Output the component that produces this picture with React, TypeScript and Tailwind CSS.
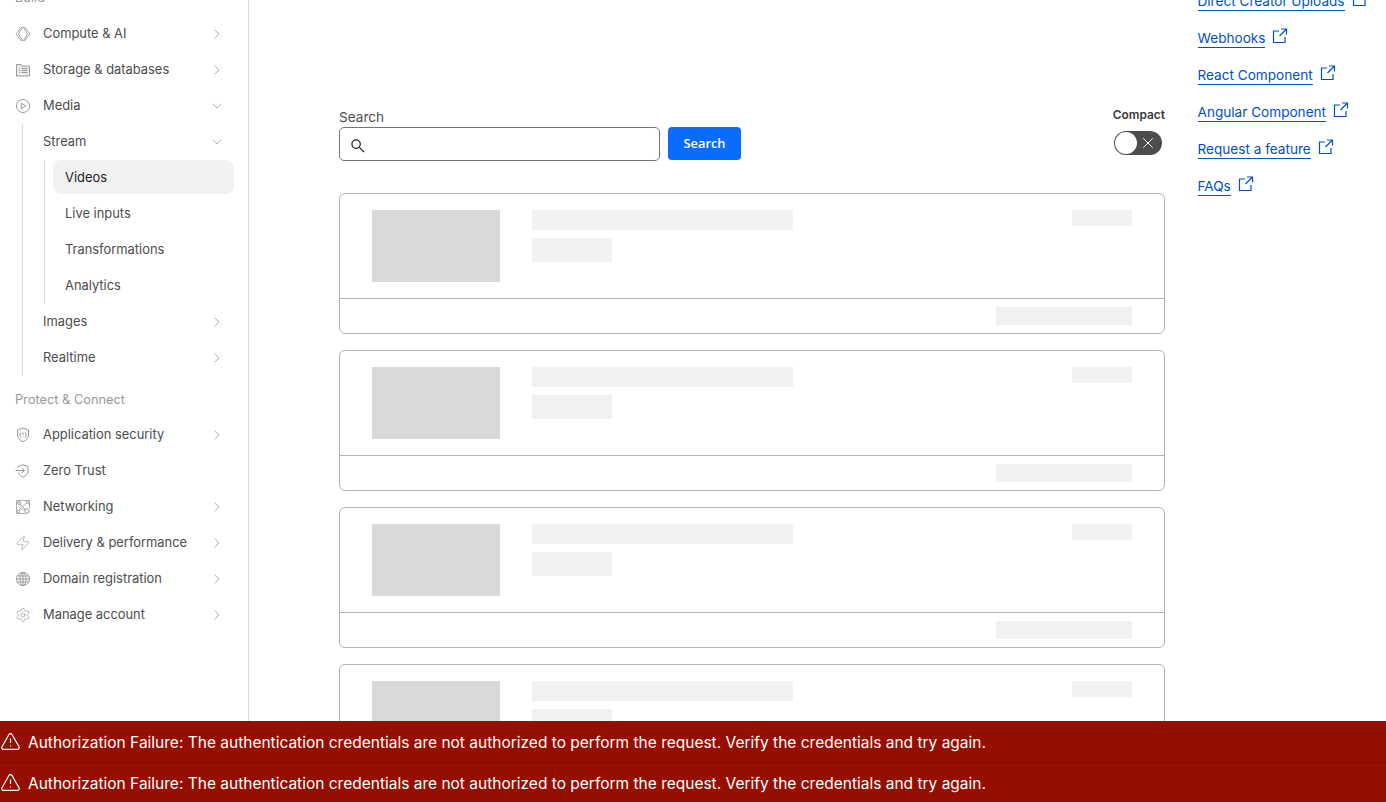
import { ChevronDown, ChevronRight, Settings, TriangleAlert, X, Zap } from 'lucide-react';
import type { ReactNode } from 'react';

const iconClass = 'w-4 h-4 text-[#999999]';

function SvgIcon({ children }: { children: ReactNode }) {
  return (
    <svg viewBox="0 0 16 16" fill="none" stroke="currentColor" strokeWidth="1" className={iconClass}>
      {children}
    </svg>
  );
}

const ComputeIcon = () => (
  <SvgIcon>
    <path d="M6 1.500 1 8l5 6.500h1.500L3.500 8l4-6.500zM10 1.500 15 8l-5 6.500H8.500l4-6.500-4-6.500z" strokeWidth="0.9" />
  </SvgIcon>
);

const StorageIcon = () => (
  <SvgIcon>
    <path d="M1.500 14v-11.500h4.500l1 1.500h7.500v10z" fill="#ececec" />
    <path d="M4 6.500h1M6.500 6.500h6M4 8.500h1M6.500 8.500h6M4 10.500h1M6.500 10.500h6" />
  </SvgIcon>
);

const MediaIcon = () => (
  <SvgIcon>
    <circle cx="8" cy="8" r="6.500" />
    <path d="M6.200 5.200v5.600L10.800 8z" />
  </SvgIcon>
);

const SecurityIcon = () => (
  <SvgIcon>
    <path d="M8 1 13.500 3v5c0 3-2.500 5.400-5.500 6.800-3-1.400-5.500-3.800-5.500-6.800V3z" />
    <path d="M6 5.500a3.500 3.500 0 0 0 0 5M10 5.500a3.500 3.500 0 0 1 0 5M8 5.500v3M8 9.800v.7" />
  </SvgIcon>
);

const ZeroTrustIcon = () => (
  <SvgIcon>
    <path d="M3 5V3.500L8 1.800l5 1.700V8c0 3-2.200 5-5 6.200C5.800 13.200 3.800 11.500 3.200 9.500" />
    <path d="M0.500 7.500H9.500M7 5l2.500 2.500L7 10" />
  </SvgIcon>
);

const NetworkIcon = () => (
  <SvgIcon>
    <path d="M1.500 1.500h13M1.500 1.500v13M1.500 14.500h9M14.500 1.500v8" strokeWidth="0.8" />
    <path d="M3.500 3.500 11 11M12.500 3.500 5 9.500 3.500 12.500M5 9.500l6 1.500" strokeWidth="0.8" />
    <circle cx="4" cy="4" r="1.500" fill="white" />
    <circle cx="12.500" cy="3.500" r="1.200" fill="white" />
    <circle cx="3.500" cy="12.500" r="1.200" fill="white" />
    <circle cx="12" cy="12" r="2.200" fill="white" />
  </SvgIcon>
);

const GlobeIcon = () => (
  <SvgIcon>
    <circle cx="8" cy="8" r="6.500" />
    <ellipse cx="8" cy="8" rx="3" ry="6.500" />
    <path d="M8 1.500v13M1.500 8h13M2.300 5h11.400M2.300 11h11.400" />
  </SvgIcon>
);

function ExternalIcon() {
  return (
    <svg viewBox="0 0 16 16" fill="none" stroke="#0051c3" strokeWidth="1.200" className="w-4 h-4 mb-[5px] ml-[7px]">
      <path d="M7 3H1.500v11.500H13V9" />
      <path d="M9 1h5.500v5.500M14.500 1 7.500 8" />
    </svg>
  );
}

function NavRow({ icon, label, chevron }: { icon?: ReactNode; label: string; chevron?: 'right' | 'down' }) {
  return (
    <div className="h-9 flex items-center text-[12.9px] text-[#4d4d4d]">
      {icon && <span className="w-[28px] flex shrink-0 justify-start">{icon}</span>}
      <span className="flex-1">{label}</span>
      {chevron === 'right' && <ChevronRight className="w-4 h-4 mr-[9px] text-[#8a8a8a]" strokeWidth={1} />}
      {chevron === 'down' && <ChevronDown className="w-4 h-4 mr-[9px] text-[#8a8a8a]" strokeWidth={1} />}
    </div>
  );
}

function Sidebar() {
  return (
    <aside className="w-[249px] shrink-0 border-r border-[#d9d9d9] overflow-hidden">
      <div className="-mt-[20px] pl-[15px] pr-[14px]">
        <div className="h-9 flex items-center text-[12.8px] text-[#999999]">Build</div>
        <NavRow icon={<ComputeIcon />} label="Compute & AI" chevron="right" />
        <NavRow icon={<StorageIcon />} label="Storage & databases" chevron="right" />
        <NavRow icon={<MediaIcon />} label="Media" chevron="down" />
        <div className="ml-[7px] pl-[20px] border-l border-[#d9d9d9] mb-[5px]">
          <NavRow label="Stream" chevron="down" />
          <div className="ml-[1px] pl-[8px] border-l border-[#d9d9d9]">
            <div className="h-9 flex items-start">
              <div className="w-full h-[34px] flex items-center pl-3 pt-[1px] rounded-lg bg-[#f2f2f2] text-[12.9px] text-[#1d1d1d]">
                Videos
              </div>
            </div>
            <div className="h-9 flex items-center pl-3 text-[12.9px] text-[#4d4d4d]">Live inputs</div>
            <div className="h-9 flex items-center pl-3 text-[12.9px] text-[#4d4d4d]">Transformations</div>
            <div className="h-9 flex items-center pl-3 text-[12.9px] text-[#4d4d4d]">Analytics</div>
          </div>
          <NavRow label="Images" chevron="right" />
          <NavRow label="Realtime" chevron="right" />
        </div>
        <div className="h-9 flex items-center pt-[2px] text-[12.8px] text-[#999999]">Protect &amp; Connect</div>
        <NavRow icon={<SecurityIcon />} label="Application security" chevron="right" />
        <NavRow icon={<ZeroTrustIcon />} label="Zero Trust" />
        <NavRow icon={<NetworkIcon />} label="Networking" chevron="right" />
        <NavRow icon={<Zap className={iconClass} strokeWidth={1} />} label="Delivery & performance" chevron="right" />
        <NavRow icon={<GlobeIcon />} label="Domain registration" chevron="right" />
        <NavRow icon={<Settings className={iconClass} strokeWidth={1} />} label="Manage account" chevron="right" />
      </div>
    </aside>
  );
}

function SkeletonCard() {
  return (
    <div className="shrink-0 rounded-md border border-[#b3b3b3] bg-white">
      <div className="flex pt-4 pb-4 pl-8 pr-8 border-b border-[#b3b3b3]">
        <div className="w-32 h-[72px] bg-[#d9d9d9]" />
        <div className="ml-8 flex-1">
          <div className="w-[261px] h-5 bg-[#f2f2f2]" />
          <div className="w-20 h-6 mt-2 bg-[#f2f2f2]" />
        </div>
        <div className="w-[60px] h-4 bg-[#f2f2f2]" />
      </div>
      <div className="flex justify-end py-2 pr-8">
        <div className="w-[136px] h-[18px] bg-[#f2f2f2]" />
      </div>
    </div>
  );
}

const links = [
  'Direct Creator Uploads',
  'Webhooks',
  'React Component',
  'Angular Component',
  'Request a feature',
  'FAQs',
];

function ResourceLinks() {
  return (
    <div className="ml-[32.5px] -mt-[17px]">
      {links.map((link) => (
        <div key={link} className="h-[37px] flex items-center">
          <span className="text-[13.6px] leading-[18px] text-[#0051c3] border-b border-[#0051c3]">{link}</span>
          <ExternalIcon />
        </div>
      ))}
    </div>
  );
}

function ErrorBanner({ divided }: { divided?: boolean }) {
  return (
    <div
      className={`flex items-center gap-[7px] bg-[#960e00] text-white text-[15.5px] ${
        divided ? 'h-[42px] border-b border-[#7f0c00]' : 'h-[39px]'
      }`}
    >
      <TriangleAlert className="w-[21px] h-[21px]" strokeWidth={1.4} />
      <span className="pt-[2px]">Authorization Failure: The authentication credentials are not authorized to perform the request. Verify the credentials and try again.</span>
    </div>
  );
}

export default function App() {
  return (
    <div className="h-[802px] flex flex-col overflow-hidden bg-white font-['Inter',sans-serif]">
      <div className="flex-1 min-h-0 flex overflow-hidden">
        <Sidebar />
        <main className="flex-1 flex pl-[90px]">
          <div className="w-[826px] pt-[108px] flex flex-col">
            <div className="flex items-start justify-between">
              <div>
                <div className="text-[13.6px] leading-[18px] text-[#4d4d4d]">Search</div>
                <div className="mt-[1px] flex items-start gap-2">
                  <div className="w-[321px] h-[34px] flex items-center pl-[10px] rounded-[5px] border border-[#757575]">
                    <svg viewBox="0 0 16 16" fill="none" stroke="#1d1d1d" strokeWidth="1.300" className="w-[15px] h-[15px] mt-[2px]">
                      <circle cx="6.500" cy="6.500" r="4.500" />
                      <path d="M10 10l5 5" />
                    </svg>
                  </div>
                  <button className="w-[73px] h-[33px] rounded-[4px] bg-[#0a6cff] text-white text-[12.8px] font-semibold font-['Open_Sans',sans-serif]">
                    Search
                  </button>
                </div>
              </div>
              <div className="flex flex-col items-end">
                <div className="mt-[-1px] text-[11.9px] leading-[16px] font-semibold text-[#36393a]">Compact</div>
                <div className="mt-2 mr-[3px] w-12 h-6 flex items-center justify-between pl-[1px] pr-[5px] rounded-full bg-[#4d4d4d]">
                  <div className="w-[22px] h-[22px] rounded-full bg-white" />
                  <X className="w-[18px] h-[18px] text-white" strokeWidth={1.25} />
                </div>
              </div>
            </div>
            <div className="mt-[32px] flex flex-col gap-4">
              <SkeletonCard />
              <SkeletonCard />
              <SkeletonCard />
              <SkeletonCard />
            </div>
          </div>
          <ResourceLinks />
        </main>
      </div>
      <ErrorBanner divided />
      <ErrorBanner />
    </div>
  );
}
